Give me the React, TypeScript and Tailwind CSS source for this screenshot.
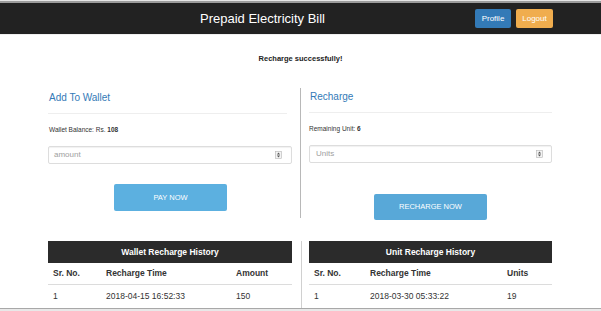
import React from 'react';

const Spinner: React.FC = () => (
  <svg width="7" height="8" viewBox="0 0 7 8" className="shrink-0">
    <rect x="0.5" y="0.5" width="6" height="7" fill="#f3f3f3" stroke="#b5b5b5" strokeWidth="0.6" />
    <path d="M3.5 1.6 L5.1 3.4 L1.9 3.4 Z" fill="#555" />
    <path d="M3.5 6.4 L5.1 4.6 L1.9 4.6 Z" fill="#555" />
  </svg>
);

interface HistoryProps {
  title: string;
  lastCol: string;
  time: string;
  value: string;
  cols: string;
}

const HistoryTable: React.FC<HistoryProps> = ({ title, lastCol, time, value, cols }) => (
  <div className="w-full">
    <div className="h-[22px] bg-[#2b2b2b] text-white font-bold text-[8.5px] flex items-center justify-center">
      {title}
    </div>
    <div className={`grid ${cols} h-[22px] items-center border-b border-[#dcdcdc] text-[8.5px] font-bold text-[#333]`}>
      <span className="pl-[5px]">Sr. No.</span>
      <span className="pl-[5px]">Recharge Time</span>
      <span className="pl-[5px]">{lastCol}</span>
    </div>
    <div className={`grid ${cols} h-[22px] items-center text-[8.5px] text-[#333]`}>
      <span className="pl-[5px]">1</span>
      <span className="pl-[5px]">{time}</span>
      <span className="pl-[5px]">{value}</span>
    </div>
  </div>
);

const App: React.FC = () => {
  return (
    <div className="w-[601px] h-[311px] overflow-hidden bg-white font-['Liberation_Sans',Arial,sans-serif] text-[#333]">
      <div className="h-[1px] bg-[#e6e6e6]"></div>
      <div className="h-[2px] bg-[#9c9c9c]"></div>

      {/* Header */}
      <div className="h-[31px] bg-[#222] flex items-center">
        <span className="ml-[200px] text-white text-[13px] leading-none">Prepaid Electricity Bill</span>
        <div className="ml-auto mr-[48px] flex gap-[5px]">
          <button className="w-[36px] h-[19px] rounded-[2px] bg-[#337ab7] text-white text-[8px] leading-none">Profile</button>
          <button className="w-[37px] h-[19px] rounded-[2px] bg-[#f0ad4e] text-white text-[8px] leading-none">Logout</button>
        </div>
      </div>
      <div className="h-[1px] bg-[#efefef]"></div>

      <div className="h-[48px] flex items-center justify-center text-[7.5px] font-bold text-[#222]">
        Recharge successfully!
      </div>

      {/* Forms */}
      <div className="flex h-[137px]">
        <div className="ml-[48px] w-[244px] flex flex-col">
          <div className="h-[28px] flex items-center pl-[1px] text-[10px] text-[#337ab7]">Add To Wallet</div>
          <div className="mt-[2px] mr-[5px] border-t border-[#eeeeee]"></div>
          <div className="h-[32px] flex items-center pl-[1px] text-[6.5px] text-[#333]">
            Wallet Balance: Rs.&nbsp;<b>108</b>
          </div>
          <div className="h-[18px] border border-[#dddddd] rounded-[2px] shadow-[inset_0_1px_1px_rgba(0,0,0,0.06)] flex items-center pl-[5px] pr-[9px]">
            <span className="flex-1 text-[8px] text-[#a0a0a0]">amount</span>
            <Spinner />
          </div>
          <button className="mt-[20px] ml-[66px] w-[113px] h-[27px] rounded-[2px] bg-[#5cb0e0] text-white text-[7.5px]">
            PAY NOW
          </button>
        </div>

        <div className="ml-[8px] mt-[5px] w-px h-[130px] bg-[#b8b8b8]"></div>

        <div className="ml-[8px] w-[243px] flex flex-col">
          <div className="h-[28px] flex items-center pl-[1px] text-[10px] text-[#337ab7]">Recharge</div>
          <div className="mt-[2px] border-t border-[#eeeeee]"></div>
          <div className="h-[32px] flex items-center text-[6.5px] text-[#333]">
            Remaining Unit:&nbsp;<b>6</b>
          </div>
          <div className="h-[18px] border border-[#dddddd] rounded-[2px] shadow-[inset_0_1px_1px_rgba(0,0,0,0.06)] flex items-center pl-[6px] pr-[8px]">
            <span className="flex-1 text-[8px] text-[#a0a0a0]">Units</span>
            <Spinner />
          </div>
          <button className="mt-[31px] ml-[65px] w-[113px] h-[27px] rounded-[2px] bg-[#58a8d8] text-white text-[7.5px]">
            RECHARGE NOW
          </button>
        </div>
      </div>

      {/* History tables */}
      <div className="flex pt-[21px]">
        <div className="ml-[48px] w-[244px]">
          <HistoryTable
            title="Wallet Recharge History"
            lastCol="Amount"
            time="2018-04-15 16:52:33"
            value="150"
            cols="grid-cols-[53px_130px_1fr]"
          />
        </div>
        <div className="ml-[9px] w-px h-[67px] bg-[#d0d0d0]"></div>
        <div className="ml-[7px] w-[243px]">
          <HistoryTable
            title="Unit Recharge History"
            lastCol="Units"
            time="2018-03-30 05:33:22"
            value="19"
            cols="grid-cols-[56px_137px_1fr]"
          />
        </div>
      </div>
      <div className="h-[1px] bg-[#a8a8a8]"></div>
      <div className="h-[2px] bg-[#e8e8e8]"></div>
    </div>
  );
};

export default App;
